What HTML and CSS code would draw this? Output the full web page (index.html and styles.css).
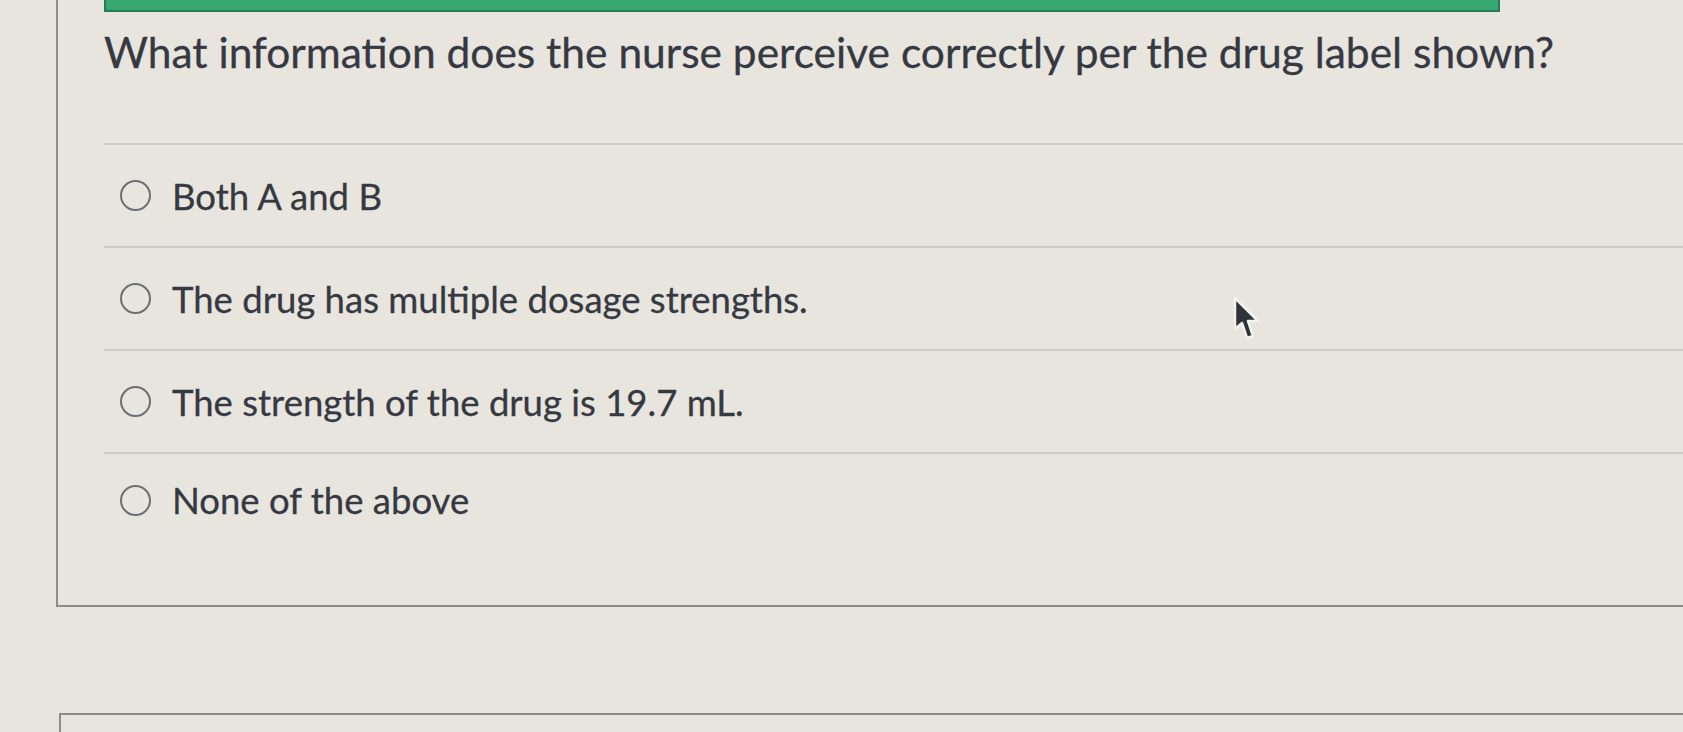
FILE: index.html
```html
<!DOCTYPE html>
<html>
<head>
    <meta charset="UTF-8">
    <title>Question</title>
    <link rel="stylesheet" href="styles.css">
</head>
<body>

<div id="card">
    <div class="top-bar"></div>
    <h1 class="question">What information does the nurse perceive correctly per the drug label shown?</h1>

    <ul class="answers">
        <li class="answer"><span class="radio"></span>Both A and B</li>
        <li class="answer"><span class="radio"></span>The drug has multiple dosage strengths.</li>
        <li class="answer"><span class="radio"></span>The strength of the drug is 19.7 mL.</li>
        <li class="answer last"><span class="radio"></span>None of the above</li>
    </ul>

    <svg class="cursor" width="28" height="48" viewBox="0 0 28 48">
        <path d="M3 2 L3 33 L10 27 L15 42 L21 40 L16 25 L26 25 Z" fill="#2f3337" stroke="#f4f2ee" stroke-width="2.5" stroke-linejoin="round"/>
    </svg>
</div>

<div id="next-card"></div>

</body>
</html>
```

FILE: styles.css
```css
*, *::after, *::before {
    box-sizing: border-box;
}

html, body {
    background-color: #e8e5df;
    height: 100%;
    width: 100%;
    padding: 0;
    margin: 0;
    overflow: hidden;
    font-family: Lato, "Noto Sans", sans-serif;
    color: #363941;
}

#card {
    position: relative;
    margin-left: 56px;
    width: 1700px;
    height: 607px;
    border-left: 2px solid #8d8c88;
    border-bottom: 2px solid #8d8c88;
    padding-left: 46px;
}

.top-bar {
    width: 1396px;
    height: 12px;
    background: #38a873;
    border: 2px solid #2a7a57;
    border-top: none;
}

.question {
    margin: 0;
    padding-top: 15px;
    height: 133px;
    font-size: 42.5px;
    font-weight: normal;
    line-height: 50px;
    -webkit-text-stroke: 0.3px #363941;
    border-bottom: 2px solid #cfccc6;
}

.answers {
    list-style: none;
    margin: 0;
    padding: 0;
}

.answer {
    display: flex;
    align-items: center;
    height: 103px;
    font-size: 36.5px;
    -webkit-text-stroke: 0.3px #363941;
    border-bottom: 2px solid #cfccc6;
    padding-left: 16px;
}

.answer.last {
    border-bottom: none;
    height: 92px;
}

.radio {
    width: 31px;
    height: 31px;
    border: 2px solid #6e6f72;
    border-radius: 50%;
    margin-right: 21px;
    flex: none;
}

.cursor {
    position: absolute;
    left: 1174px;
    top: 296px;
}

#next-card {
    margin-left: 59px;
    margin-top: 106px;
    height: 40px;
    border-left: 2px solid #8d8c88;
    border-top: 2px solid #8d8c88;
}
```
